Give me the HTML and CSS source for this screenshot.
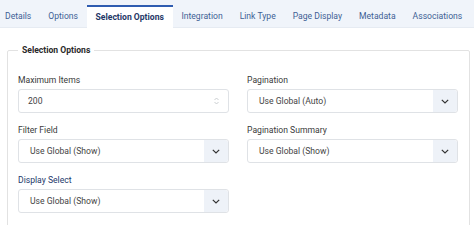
FILE: index.html
```html
<!DOCTYPE html>
<html lang="en">
<head>
<meta charset="utf-8">
<title>Selection Options</title>
<link rel="stylesheet" href="styles.css">
</head>
<body>
<nav class="tabs">
  <span class="tab first">Details</span>
  <span class="tab">Options</span>
  <span class="tab active">Selection Options</span>
  <span class="tab">Integration</span>
  <span class="tab">Link Type</span>
  <span class="tab">Page Display</span>
  <span class="tab">Metadata</span>
  <span class="tab">Associations</span>
</nav>
<main class="content">
  <fieldset class="box">
    <legend class="legend">Selection Options</legend>
    <div class="grid">
      <div class="field">
        <label class="label">Maximum Items</label>
        <div class="control">
          <span class="value">200</span>
          <svg class="spin" width="5" height="8" viewBox="0 0 5 8"><path d="M0.5 3 L2.5 1 L4.5 3 M0.5 5 L2.5 7 L4.5 5" fill="none" stroke="#c4c8cc" stroke-width="0.9"/></svg>
        </div>
      </div>
      <div class="field">
        <label class="label">Pagination</label>
        <div class="control select">
          <span class="value">Use Global (Auto)</span>
          <span class="caret"><svg width="8" height="5" viewBox="0 0 8 5"><path d="M0.8 0.8 L4 4 L7.2 0.8" fill="none" stroke="#333" stroke-width="1.2"/></svg></span>
        </div>
      </div>
      <div class="field">
        <label class="label">Filter Field</label>
        <div class="control select">
          <span class="value">Use Global (Show)</span>
          <span class="caret"><svg width="8" height="5" viewBox="0 0 8 5"><path d="M0.8 0.8 L4 4 L7.2 0.8" fill="none" stroke="#333" stroke-width="1.2"/></svg></span>
        </div>
      </div>
      <div class="field">
        <label class="label">Pagination Summary</label>
        <div class="control select">
          <span class="value">Use Global (Show)</span>
          <span class="caret"><svg width="8" height="5" viewBox="0 0 8 5"><path d="M0.8 0.8 L4 4 L7.2 0.8" fill="none" stroke="#333" stroke-width="1.2"/></svg></span>
        </div>
      </div>
      <div class="field">
        <label class="label hl">Display Select</label>
        <div class="control select">
          <span class="value">Use Global (Show)</span>
          <span class="caret"><svg width="8" height="5" viewBox="0 0 8 5"><path d="M0.8 0.8 L4 4 L7.2 0.8" fill="none" stroke="#333" stroke-width="1.2"/></svg></span>
        </div>
      </div>
    </div>
  </fieldset>
</main>
</body>
</html>
```
FILE: styles.css
```css
* { box-sizing: border-box; }
html, body { margin: 0; padding: 0; background: #fff; }
body {
  font-family: Roboto, "Liberation Sans", Arial, sans-serif;
  font-size: 9px;
  color: #333;
  width: 474px;
  height: 225px;
  overflow: hidden;
}
.tabs {
  display: flex;
  height: 28px;
  padding-top: 5px;
  background: #f0f4fa;
  border-bottom: 1px solid #e6ebf2;
}
.tab {
  display: flex;
  align-items: center;
  padding: 0 8.5px 0 8.5px;
  color: #3e5f95;
  font-size: 8.6px;
  white-space: nowrap;
}
.tab.first { padding-left: 5px; }
.tab.active {
  background: #fff;
  color: #1f3766;
  font-weight: 700;
  border-top: 2px solid #2f5cb0;
  padding: 0 9px 2px;
  margin-bottom: -1px;
}
.content { padding: 16px 4px 0 7px; }
.box {
  margin: 0;
  border: 1px solid #e2e2e2;
  border-radius: 2px;
  padding: 18px 11px 14px 10px;
  min-width: 0;
}
.legend {
  margin-left: 0;
  padding: 0 4px;
  font-weight: 700;
  font-size: 8.6px;
  line-height: 12px;
  color: #2a2a2a;
}
.grid {
  display: grid;
  grid-template-columns: 211px 211px;
  column-gap: 18px;
  row-gap: 11px;
}
.field { display: flex; flex-direction: column; gap: 3px; }
.label {
  font-size: 8.6px;
  line-height: 12px;
  color: #3a3a3a;
}
.label.hl { color: #23386a; }
.control {
  height: 24px;
  border: 1px solid #dfe2e6;
  border-radius: 3px;
  background: #fff;
  display: flex;
  align-items: center;
  justify-content: space-between;
  padding-left: 9px;
  padding-right: 9px;
  color: #444;
  font-size: 8.6px;
}
.control.select { padding-right: 0; padding-left: 11px; }
.caret {
  width: 24px;
  align-self: stretch;
  background: #eef2f8;
  display: flex;
  align-items: center;
  justify-content: center;
  border-radius: 0 3px 3px 0;
}
.spin { display: block; }
```
